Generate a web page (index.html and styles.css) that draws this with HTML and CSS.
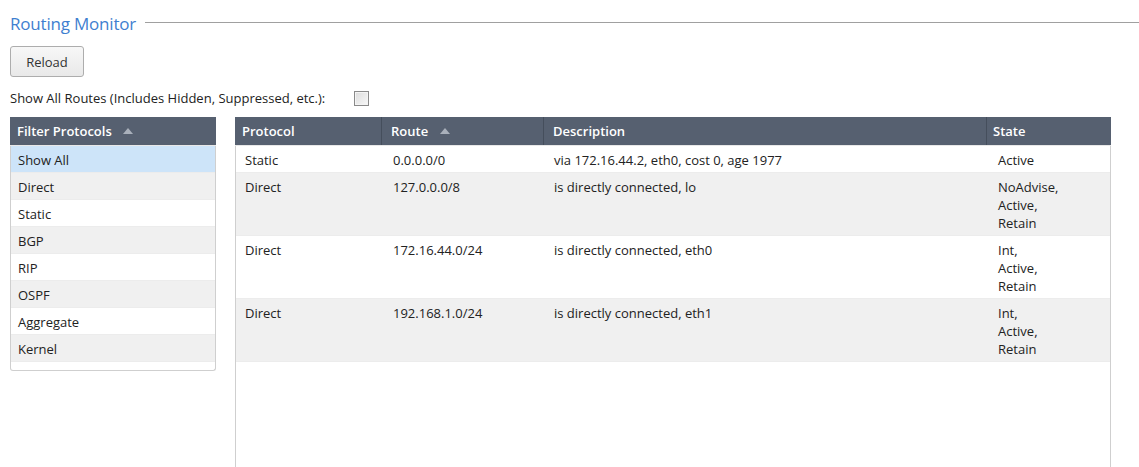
FILE: index.html
```html
<!DOCTYPE html>
<html>
<head>
<meta charset="utf-8">
<link rel="stylesheet" href="styles.css">
</head>
<body>
<div class="page">
  <div class="legend"><span class="title">Routing Monitor</span><span class="rule"></span></div>
  <button class="btn">Reload</button>
  <div class="showall"><span>Show All Routes (Includes Hidden, Suppressed, etc.):</span><span class="checkbox"></span></div>
  <div class="main">
    <div class="filter">
      <div class="fhead">Filter Protocols <span class="arrow"></span></div>
      <div class="frow sel">Show All</div>
      <div class="frow alt">Direct</div>
      <div class="frow">Static</div>
      <div class="frow alt">BGP</div>
      <div class="frow">RIP</div>
      <div class="frow alt">OSPF</div>
      <div class="frow">Aggregate</div>
      <div class="frow alt">Kernel</div>
      <div class="fpad"></div>
    </div>
    <div class="grid">
      <div class="ghead">
        <div class="c c1">Protocol</div>
        <div class="c c2">Route <span class="arrow"></span></div>
        <div class="c c3">Description</div>
        <div class="c c4">State</div>
      </div>
      <div class="grow">
        <div class="c c1">Static</div><div class="c c2">0.0.0.0/0</div><div class="c c3">via 172.16.44.2, eth0, cost 0, age 1977</div><div class="c c4">Active</div>
      </div>
      <div class="grow alt">
        <div class="c c1">Direct</div><div class="c c2">127.0.0.0/8</div><div class="c c3">is directly connected, lo</div><div class="c c4">NoAdvise,<br>Active,<br>Retain</div>
      </div>
      <div class="grow">
        <div class="c c1">Direct</div><div class="c c2">172.16.44.0/24</div><div class="c c3">is directly connected, eth0</div><div class="c c4">Int,<br>Active,<br>Retain</div>
      </div>
      <div class="grow alt">
        <div class="c c1">Direct</div><div class="c c2">192.168.1.0/24</div><div class="c c3">is directly connected, eth1</div><div class="c c4">Int,<br>Active,<br>Retain</div>
      </div>
      <div class="gfill"></div>
    </div>
  </div>
</div>
</body>
</html>
```
FILE: styles.css
```css
html, body { margin: 0; padding: 0; background: #fff; }
body { font-family: "Open Sans", "Noto Sans", sans-serif; font-size: 13px; color: #222; overflow: hidden; height: 467px; }
*, *::before, *::after { box-sizing: border-box; }
.page { padding: 10px 0 0 10px; }
.legend { display: flex; align-items: center; height: 26px; }
.title { color: #3f7fd0; font-size: 17px; font-weight: 400; letter-spacing: -0.2px; }
.rule { flex: 1; height: 1px; background: #a0a0a0; margin-left: 9px; margin-top: -2px; }
.btn { display: block; margin-top: 10px; width: 74px; height: 31px; border: 1px solid #adadad; border-radius: 3px; background: linear-gradient(#f7f7f7, #e9e9e9); font-family: inherit; font-size: 13px; color: #333; padding: 0; }
.showall { display: flex; align-items: center; margin-top: 12px; height: 18px; }
.showall span:first-child { width: 344px; }
.checkbox { width: 15px; height: 15px; border: 1px solid #8a8a8a; background: linear-gradient(135deg, #dcdcdc, #f8f8f8); box-shadow: inset 0 0 0 1px #f4f4f4; }
.main { display: flex; margin-top: 10px; align-items: flex-start; }
.filter { width: 206px; border: 1px solid #cfcfcf; border-top: none; border-radius: 0 0 3px 3px; }
.fhead, .ghead { background: #566070; color: #fff; font-weight: 600; height: 29px; line-height: 28px; border-bottom: 1px solid #e8e8e8; }
.fhead { padding-left: 7px; margin: 0 -1px; }
.arrow { display: inline-block; width: 0; height: 0; border-left: 5px solid transparent; border-right: 5px solid transparent; border-bottom: 6px solid #a9b0bb; margin-left: 8px; vertical-align: 2px; }
.frow { height: 27px; line-height: 25px; padding: 2px 0 0 7px; border-bottom: 1px solid #ececec; }
.frow.alt { background: #f0f0f0; }
.frow.sel { background: #cde4f9; }
.fpad { height: 8px; }
.grid { margin-left: 19px; width: 876px; border-right: 1px solid #cfcfcf; border-left: 1px solid #cfcfcf; height: 360px; display: flex; flex-direction: column; }
.ghead { display: flex; margin: 0 -1px; }
.ghead .c { border-left: 1px solid #454e5c; padding-left: 9px; }
.ghead .c1 { border-left: none; padding-left: 7px; }
.ghead .c4 { padding-left: 6px; }
.grow { display: flex; border-bottom: 1px solid #ececec; }
.grow.alt { background: #f0f0f0; }
.grow .c { padding: 5px 0 3px 10px; line-height: 18px; }
.grow .c1 { padding-left: 9px; }
.grow .c2 { padding-left: 11px; }
.grow .c4 { padding-left: 11px; }
.c1 { width: 146px; }
.c2 { width: 162px; }
.c3 { width: 443px; }
.c4 { flex: 1; }
.gfill { flex: 1; }
```
